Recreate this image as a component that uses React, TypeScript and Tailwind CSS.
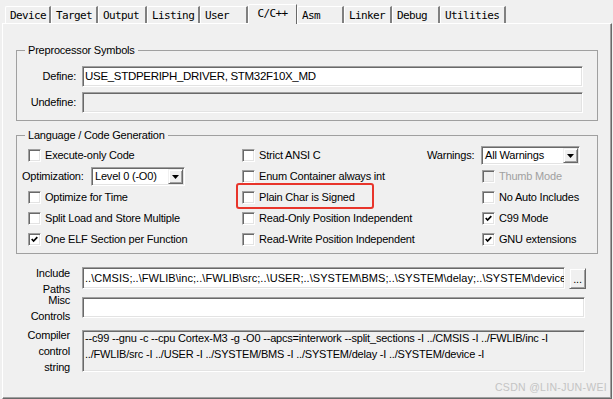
import clsx from "clsx";

const tabs = [
  { label: "Device", w: "w-[46px]" },
  { label: "Target", w: "w-[47px]" },
  { label: "Output", w: "w-[49px]" },
  { label: "Listing", w: "w-[53px]" },
  { label: "User", w: "w-[48px]" },
  { label: "C/C++", w: "w-[49px]", active: true },
  { label: "Asm", w: "w-[47px]" },
  { label: "Linker", w: "w-[48px]" },
  { label: "Debug", w: "w-[48px]" },
  { label: "Utilities", w: "w-[66px]" },
];

const sunken =
  "border border-t-[#a0a0a0] border-l-[#a0a0a0] border-b-white border-r-white shadow-[inset_1px_1px_0_#696969,inset_-1px_-1px_0_#e3e3e3]";
const raised =
  "border border-t-[#f0f0f0] border-l-[#f0f0f0] border-b-[#696969] border-r-[#696969] shadow-[inset_1px_1px_0_#ffffff,inset_-1px_-1px_0_#a0a0a0]";

function Check({ checked, disabled }: { checked?: boolean; disabled?: boolean }) {
  return (
    <span className={clsx("w-[13px] h-[13px] shrink-0 flex items-center justify-center", sunken, disabled ? "bg-[#f0f0f0]" : "bg-white")}>
      {checked && (
        <svg width="7" height="7" viewBox="0 0 7 7">
          <polyline points="0.7,3 2.6,5 6.3,1.2" fill="none" stroke="#000" strokeWidth="1.7" />
        </svg>
      )}
    </span>
  );
}

function CheckRow({ label, checked, disabled, className }: { label: string; checked?: boolean; disabled?: boolean; className?: string }) {
  return (
    <div className={clsx("h-[21px] flex items-center gap-[4px]", className)}>
      <Check checked={checked} disabled={disabled} />
      <span className={clsx("whitespace-nowrap", disabled && "text-[#a0a0a0]")}>{label}</span>
    </div>
  );
}

function Select({ value, className }: { value: string; className: string }) {
  return (
    <div className={clsx("h-[19px] bg-white flex items-center", sunken, className)}>
      <span className="flex-1 pl-[3px] whitespace-nowrap overflow-hidden">{value}</span>
      <span className={clsx("w-[15px] h-[15px] mr-[1px] bg-[#f0f0f0] flex items-center justify-center", raised)}>
        <svg width="7" height="4" viewBox="0 0 7 4">
          <path d="M0 0h7L3.5 4z" fill="#000" />
        </svg>
      </span>
    </div>
  );
}

export default function App() {
  return (
    <div className="w-[613px] h-[399px] bg-[#f0f0f0] overflow-hidden flex flex-col font-['Liberation_Sans',Arial,sans-serif] text-[11px] tracking-[-0.2px] text-black">
      {/* Tabs */}
      <div className="h-[23px] flex items-end pl-[5px] shrink-0 relative z-10 font-['DejaVu_Sans_Mono',monospace] tracking-[-0.6px]">
        {tabs.map((t) =>
          t.active ? (
            <div
              key={t.label}
              className={clsx(t.w, "h-[20px] -mb-[1px] bg-[#f0f0f0] border-t border-l border-white border-r border-r-[#696969] rounded-tl-[2px] flex justify-center pt-[2px] leading-[14px]")}
            >
              {t.label}
            </div>
          ) : (
            <div
              key={t.label}
              className={clsx(t.w, "h-[17px] border-t border-l border-white border-r-2 border-r-[#808080] rounded-tl-[2px] pl-[4px] pt-[2px] leading-[14px] whitespace-nowrap")}
            >
              {t.label}
            </div>
          )
        )}
      </div>

      {/* Panel */}
      <div className="relative ml-[2px] w-[610px] flex-1 border-t border-l border-white border-r border-b border-r-[#696969] border-b-[#696969] shadow-[inset_-1px_-1px_0_#a0a0a0] px-[13px] flex flex-col">
        <fieldset className="mt-[20px] border border-[#a0a0a0]">
          <legend className="ml-[8px] px-[3px] leading-[13px]">Preprocessor Symbols</legend>
          <div className="pt-[9px] pb-[7px] flex flex-col gap-[5px]">
            <div className="flex items-center gap-[6px]">
              <span className="w-[59px] text-right">Define:</span>
              <div className={clsx("w-[501px] h-[21px] bg-white flex items-center pl-[2px] text-[11.5px] tracking-[-0.3px] whitespace-nowrap", sunken)}>
                USE_STDPERIPH_DRIVER, STM32F10X_MD
              </div>
            </div>
            <div className="flex items-center gap-[6px]">
              <span className="w-[59px] text-right">Undefine:</span>
              <div className={clsx("w-[501px] h-[21px] bg-[#f0f0f0]", sunken)} />
            </div>
          </div>
        </fieldset>

        <fieldset className="mt-[8px] border border-[#a0a0a0]">
          <legend className="ml-[8px] px-[3px] leading-[13px]">Language / Code Generation</legend>
          <div className="pt-[3px] pb-[3px] flex">
            <div className="w-[225px] pl-[5px] flex flex-col">
              <CheckRow label="Execute-only Code" className="pl-[6px]" />
              <div className="h-[21px] flex items-center">
                <span className="w-[69px] whitespace-nowrap">Optimization:</span>
                <Select value="Level 0 (-O0)" className="w-[94px]" />
              </div>
              <CheckRow label="Optimize for Time" className="pl-[6px]" />
              <CheckRow label="Split Load and Store Multiple" className="pl-[6px]" />
              <CheckRow label="One ELF Section per Function" checked className="pl-[6px]" />
            </div>
            <div className="w-[185px] flex flex-col">
              <CheckRow label="Strict ANSI C" />
              <CheckRow label="Enum Container always int" />
              <div className="relative">
                <CheckRow label="Plain Char is Signed" />
                <div className="absolute -left-[6px] -top-[4px] w-[138px] h-[26px] border-2 border-[#e8352b] rounded-[3px]" />
              </div>
              <CheckRow label="Read-Only Position Independent" />
              <CheckRow label="Read-Write Position Independent" />
            </div>
            <div className="flex-1 flex flex-col">
              <div className="h-[21px] flex items-center">
                <span className="w-[54px] whitespace-nowrap">Warnings:</span>
                <Select value="All Warnings" className="w-[99px]" />
              </div>
              <CheckRow label="Thumb Mode" disabled className="pl-[55px]" />
              <CheckRow label="No Auto Includes" className="pl-[55px]" />
              <CheckRow label="C99 Mode" checked className="pl-[55px]" />
              <CheckRow label="GNU extensions" checked className="pl-[55px]" />
            </div>
          </div>
        </fieldset>

        {/* Paths / controls */}
        <div className="mt-[13px] flex flex-col">
          <div className="h-[22px] flex items-center gap-[12px]">
            <div className="w-[54px] text-right leading-[16px] mt-[5px]">
              Include
              <br />
              Paths
            </div>
            <div className={clsx("w-[483px] h-[22px] bg-white flex items-center pl-[2px] whitespace-nowrap overflow-hidden tracking-[0.05px]", sunken)}>
              {"..\\CMSIS;..\\FWLIB\\inc;..\\FWLIB\\src;..\\USER;..\\SYSTEM\\BMS;..\\SYSTEM\\delay;..\\SYSTEM\\device"}
            </div>
            <div className={clsx("-ml-[8px] w-[17px] h-[21px] bg-[#f0f0f0] flex items-end justify-center pb-[3px] leading-none", raised)}>...</div>
          </div>

          <div className="mt-[8px] h-[21px] flex items-center gap-[12px]">
            <div className="w-[54px] text-right leading-[16px]">
              Misc
              <br />
              Controls
            </div>
            <div className={clsx("w-[503px] h-[21px] bg-white", sunken)} />
          </div>

          <div className="mt-[12px] h-[42px] flex items-center gap-[12px]">
            <div className="w-[54px] text-right leading-[16px]">
              Compiler
              <br />
              control
              <br />
              string
            </div>
            <div className={clsx("w-[503px] h-[42px] bg-[#f0f0f0] pl-[2px] overflow-hidden whitespace-nowrap", sunken)}>
              <div className="leading-[16px] -mt-[1px]">
                <div>--c99 --gnu -c --cpu Cortex-M3 -g -O0 --apcs=interwork --split_sections -I ../CMSIS -I ../FWLIB/inc -I</div>
                <div>../FWLIB/src -I ../USER -I ../SYSTEM/BMS -I ../SYSTEM/delay -I ../SYSTEM/device -I</div>
              </div>
            </div>
          </div>
        </div>

        <div className="absolute right-[4px] bottom-[4px] text-[10.5px] tracking-[0.3px] text-[#c4c4c4] leading-[13px]">CSDN @LIN-JUN-WEI</div>
      </div>
    </div>
  );
}
